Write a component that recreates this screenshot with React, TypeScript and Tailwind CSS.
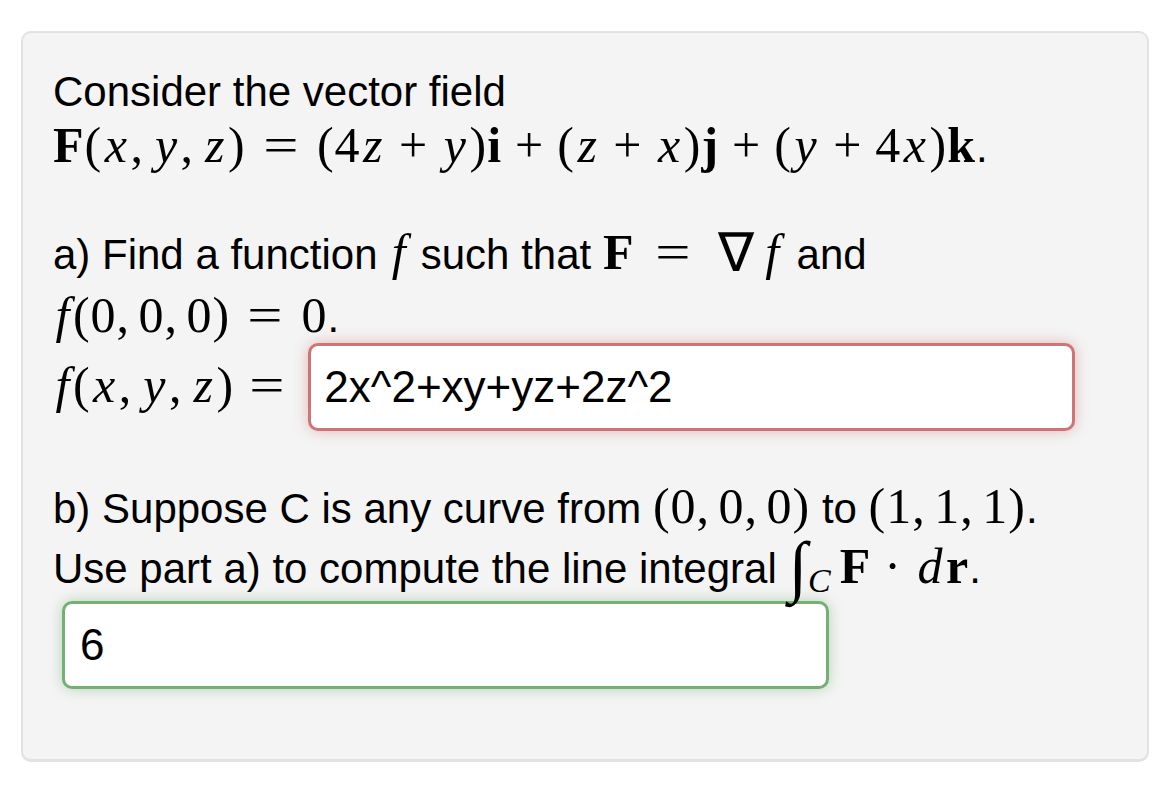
import type { ReactNode } from 'react'

// math runs: serif, a bit larger than the body text, like MathJax output
const M = ({ children }: { children: ReactNode }) => (
  <span className="font-['Liberation_Serif',serif] text-[50px] leading-none tracking-[0.02em]">{children}</span>
)
const V = ({ children }: { children: ReactNode }) => <i className="mx-[0.05em]">{children}</i>
const B = ({ children }: { children: ReactNode }) => <b>{children}</b>
const Bin = ({ children }: { children: ReactNode }) => <span className="mx-[0.26em]">{children}</span>
const Rel = () => <span className="mx-[0.42em] inline-block scale-x-125 leading-[0]">=</span>
const Comma = () => <span className="mr-[0.17em]">,</span>

const App = () => {
  return (
    <div className="min-h-screen bg-white pt-[31px] pl-[21px]">
      <div className="h-[731px] w-[1128px] rounded-[10px] border-2 border-b-[3px] border-[#e2e2e2] bg-[#f4f4f4] pl-[30px] pt-[31px] font-['Liberation_Sans',Arial,sans-serif] text-[42px] text-black">
        <div className="leading-[56px]">
          <div>Consider the vector field</div>
          <div>
            <M>
              <B>F</B>(<V>x</V>
              <Comma />
              <V>y</V>
              <Comma />
              <V>z</V>)<Rel />(4<V>z</V>
              <Bin>+</Bin>
              <V>y</V>)<B>i</B>
              <Bin>+</Bin>(<V>z</V>
              <Bin>+</Bin>
              <V>x</V>)<B>j</B>
              <Bin>+</Bin>(<V>y</V>
              <Bin>+</Bin>4<V>x</V>)<B>k</B>
            </M>
            .
          </div>
        </div>

        <div className="mt-[47px] leading-[63px]">
          <div>
            a) Find a function{' '}
            <M>
              <V>f</V>
            </M>{' '}
            such that{' '}
            <M>
              <B>F</B>
              <span className="mx-[0.5em] inline-block scale-x-125 leading-[0]">=</span>
              <span className="relative top-[2px] ml-[4px] mr-[8px] text-[54px] font-light leading-[0]">∇</span>
              <V>f</V>
            </M>
            <span className="ml-[14px]">and</span>
          </div>
          <div>
            <M>
              <V>f</V>(0<Comma />0<Comma />0)<Rel />0
            </M>
            .
          </div>
          <div className="-mt-[6px] flex items-baseline">
            <M>
              <V>f</V>(<V>x</V>
              <Comma />
              <V>y</V>
              <Comma />
              <V>z</V>)<span className="ml-[0.38em] inline-block scale-x-125">=</span>
            </M>
            <input
              readOnly
              value="2x^2+xy+yz+2z^2"
              className="ml-[26px] h-[88px] w-[767px] rounded-[10px] border-[3px] border-[#cd7474] bg-white px-[13px] text-[44px] text-black outline-none shadow-[0_0_14px_rgba(204,110,110,0.45)]"
            />
          </div>
        </div>

        <div className="mt-[48px] leading-[60px]">
          <div>
            b) Suppose C is any curve from{' '}
            <M>
              (0<Comma />0<Comma />0)
            </M>{' '}
            to{' '}
            <M>
              (1<Comma />1<Comma />1)
            </M>
            .
          </div>
          <div>
            Use part a) to compute the line integral{' '}
            <M>
              <span className="relative top-[6px] text-[68px] italic leading-[0]">∫</span>
              <sub className="text-[34px] italic">C</sub>
              <span className="ml-[8px]">
                <B>F</B>
              </span>
              <Bin>·</Bin>
              <V>d</V>
              <B>r</B>
            </M>
            .
          </div>
          <input
            readOnly
            value="6"
            className="mt-[2px] ml-[9px] h-[88px] w-[767px] rounded-[10px] border-[3px] border-[#74b074] bg-white px-[15px] text-[44px] text-black outline-none shadow-[0_0_14px_rgba(110,170,110,0.45)]"
          />
        </div>
      </div>
    </div>
  )
}

export default App
